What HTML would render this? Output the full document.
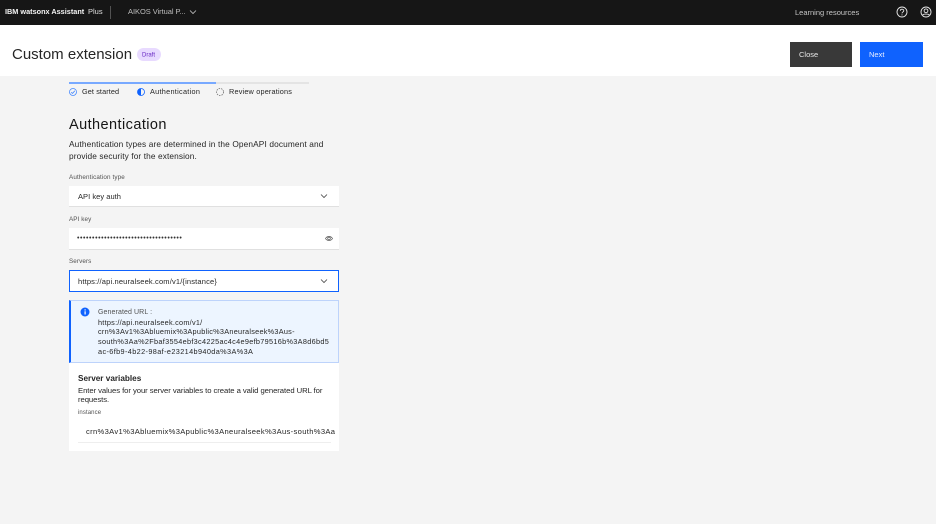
<!DOCTYPE html>
<html><head><meta charset="utf-8">
<style>
html,body{margin:0;padding:0;background:#f4f4f4}
body{width:936px;height:524px;position:relative;overflow:hidden;font-family:"Liberation Sans",sans-serif;color:#161616}
#w{position:absolute;left:0;top:0;width:936px;height:524px;background:#f4f4f4;filter:blur(.3px)}
.a{position:absolute;white-space:nowrap}
.t{position:absolute;white-space:nowrap;line-height:12px}
svg{position:absolute;overflow:visible}
</style></head><body><div id="w">
<div class="a" style="left:0;top:0;width:936px;height:25px;background:#161616"></div>
<div class="t" style="left:5px;top:6px;font-size:7.3px;color:#f4f4f4;font-weight:bold">IBM watsonx Assistant</div>
<div class="t" style="left:88px;top:6px;font-size:7.5px;color:#e0e0e0">Plus</div>
<div class="a" style="left:110px;top:6px;width:1px;height:13px;background:#525252"></div>
<div class="t" style="left:128px;top:6px;font-size:7.5px;color:#bdbdbd;letter-spacing:-.05px">AIKOS Virtual P...</div>
<svg style="left:189px;top:9px" width="8" height="6" fill="none" stroke="#c6c6c6" stroke-width=".8"><path d="M1 1.5 4 4.5 7 1.5"/></svg>
<div class="t" style="left:795px;top:6.500px;font-size:7.500px;color:#c6c6c6">Learning resources</div>
<svg style="left:895.500px;top:6px" width="12" height="12" fill="none" stroke="#e8e8e8" stroke-width=".9"><circle cx="6" cy="6" r="5"/><path d="M4.300 4.800C4.300 2.700 7.800 2.700 7.800 4.700 7.800 6 6 5.900 6 7.400"/><path d="M6 8.400V9.400"/></svg>
<svg style="left:920px;top:6px" width="12" height="12" fill="none" stroke="#e8e8e8" stroke-width=".9"><circle cx="6" cy="6" r="5"/><circle cx="6" cy="4.800" r="1.900"/><path d="M2.800 9C3.500 7.700 8.500 7.700 9.200 9"/></svg>

<div class="a" style="left:0;top:25px;width:936px;height:51px;background:#fff"></div>
<div class="t" style="left:12px;top:47px;font-size:15px;line-height:15px;color:#262626">Custom extension</div>
<div class="a" style="left:137px;top:48px;width:24px;height:13px;border-radius:7px;background:#e8daff"></div>
<div class="t" style="left:142px;top:49px;font-size:6px;line-height:12px;color:#6929c4;transform:translateY(.5px)">Draft</div>
<div class="a" style="left:790px;top:42px;width:62px;height:25px;background:#393939"></div>
<div class="t" style="left:799px;top:49px;font-size:7.500px;color:#e8e8e8">Close</div>
<div class="a" style="left:860px;top:42px;width:63px;height:25px;background:#0f62fe"></div>
<div class="t" style="left:869px;top:49px;font-size:7.500px;color:#e8eeff">Next</div>

<div class="a" style="left:69px;top:82px;width:240px;height:2px;background:#e4e4e4"></div>
<div class="a" style="left:69px;top:82px;width:147px;height:2px;background:#78a9ff"></div>
<svg style="left:69px;top:88px" width="8" height="8" fill="none" stroke="#4589ff" stroke-width=".8"><circle cx="4" cy="4" r="3.500"/><path d="M2.200 4.200 3.500 5.400 5.800 2.800"/></svg>
<div class="t" style="left:82px;top:86px;font-size:7.300px;color:#262626;letter-spacing:.1px">Get started</div>
<svg style="left:137px;top:88px" width="8" height="8"><circle cx="4" cy="4" r="3.500" fill="none" stroke="#0f62fe" stroke-width=".8"/><path d="M4 .5A3.500 3.500 0 0 0 4 7.500Z" fill="#0f62fe"/></svg>
<div class="t" style="left:150px;top:86px;font-size:7.300px;color:#262626;letter-spacing:.28px">Authentication</div>
<svg style="left:216px;top:88px" width="8" height="8" fill="none" stroke="#6f6f6f" stroke-width=".8"><circle cx="4" cy="4" r="3.500" stroke-dasharray="1.500 1"/></svg>
<div class="t" style="left:229px;top:86px;font-size:7.300px;color:#262626;letter-spacing:.18px">Review operations</div>

<div class="t" style="left:69px;top:116.500px;font-size:14.500px;line-height:17px;color:#161616;letter-spacing:.43px">Authentication</div>
<div class="t" style="left:69px;top:137.500px;font-size:8.300px;color:#262626;letter-spacing:.13px">Authentication types are determined in the OpenAPI document and</div>
<div class="t" style="left:69px;top:149.500px;font-size:8.300px;color:#262626;letter-spacing:.11px">provide security for the extension.</div>

<div class="t" style="left:69px;top:172px;font-size:6.300px;color:#525252;letter-spacing:.12px">Authentication type</div>
<div class="a" style="left:69px;top:186px;width:270px;height:20px;background:#fff;border-bottom:1px solid #e0e0e0"></div>
<div class="t" style="left:78px;top:190.500px;font-size:7.500px;color:#262626;letter-spacing:.04px">API key auth</div>
<svg style="left:320px;top:193px" width="8" height="6" fill="none" stroke="#444" stroke-width=".8"><path d="M1 1.500 4 4.500 7 1.500"/></svg>

<div class="t" style="left:69px;top:214px;font-size:6.300px;color:#525252;letter-spacing:.1px">API key</div>
<div class="a" style="left:69px;top:228px;width:270px;height:21px;background:#fff;border-bottom:1px solid #e0e0e0"></div>
<div class="t" style="left:77px;top:233px;font-size:7px;color:#333;letter-spacing:.56px">•••••••••••••••••••••••••••••••••••</div>
<svg style="left:325px;top:235px" width="8" height="7" fill="none" stroke="#525252" stroke-width=".7"><path d="M.5 3.500C2 .8 6 .8 7.500 3.500 6 6.200 2 6.200 .5 3.500Z"/><circle cx="4" cy="3.500" r="1.300"/></svg>

<div class="t" style="left:69px;top:256px;font-size:6.300px;color:#525252;letter-spacing:.1px">Servers</div>
<div class="a" style="left:69px;top:270px;width:268px;height:20px;background:#fff;border:1px solid #0f62fe"></div>
<div class="t" style="left:78px;top:275.500px;font-size:7.500px;color:#262626;letter-spacing:.16px">https://api.neuralseek.com/v1/{instance}</div>
<svg style="left:320px;top:278px" width="8" height="6" fill="none" stroke="#444" stroke-width=".8"><path d="M1 1.500 4 4.500 7 1.500"/></svg>

<div class="a" style="left:69px;top:300px;width:270px;height:63px;background:#edf5ff;box-sizing:border-box;border:1px solid #bdd3fb;border-left:2px solid #0f62fe"></div>
<svg style="left:80px;top:307px" width="10" height="10"><circle cx="5" cy="5" r="4.500" fill="#0f62fe"/><rect x="4.500" y="4.300" width="1.200" height="3.200" fill="#fff"/><rect x="4.500" y="2.300" width="1.200" height="1.200" fill="#fff"/></svg>
<div class="t" style="left:98px;top:307px;font-size:7px;color:#525252;letter-spacing:.1px">Generated URL :</div>
<div class="t" style="left:98px;top:316.500px;font-size:7.300px;color:#262626;letter-spacing:.25px">https://api.neuralseek.com/v1/</div>
<div class="t" style="left:98px;top:326px;font-size:7.300px;color:#262626;letter-spacing:.26px">crn%3Av1%3Abluemix%3Apublic%3Aneuralseek%3Aus-</div>
<div class="t" style="left:98px;top:336px;font-size:7.300px;color:#262626;letter-spacing:.31px">south%3Aa%2Fbaf3554ebf3c4225ac4c4e9efb79516b%3A8d6bd5</div>
<div class="t" style="left:98px;top:345.500px;font-size:7.300px;color:#262626;letter-spacing:.38px">ac-6fb9-4b22-98af-e23214b940da%3A%3A</div>

<div class="a" style="left:69px;top:363px;width:270px;height:88px;background:#fff"></div>
<div class="t" style="left:78px;top:372.500px;font-size:8.200px;font-weight:bold;color:#262626">Server variables</div>
<div class="t" style="left:78px;top:384.500px;font-size:7.700px;color:#262626;letter-spacing:-.06px">Enter values for your server variables to create a valid generated URL for</div>
<div class="t" style="left:78px;top:393.500px;font-size:7.700px;color:#262626;letter-spacing:-.06px">requests.</div>
<div class="t" style="left:78px;top:407px;font-size:6px;color:#525252;letter-spacing:.1px">instance</div>
<div class="t" style="left:86px;top:425.500px;font-size:7.600px;color:#262626;letter-spacing:.33px">crn%3Av1%3Abluemix%3Apublic%3Aneuralseek%3Aus-south%3Aa</div>
<div class="a" style="left:78px;top:442px;width:253px;height:1px;background:#eeeeee"></div>
</div></body></html>
